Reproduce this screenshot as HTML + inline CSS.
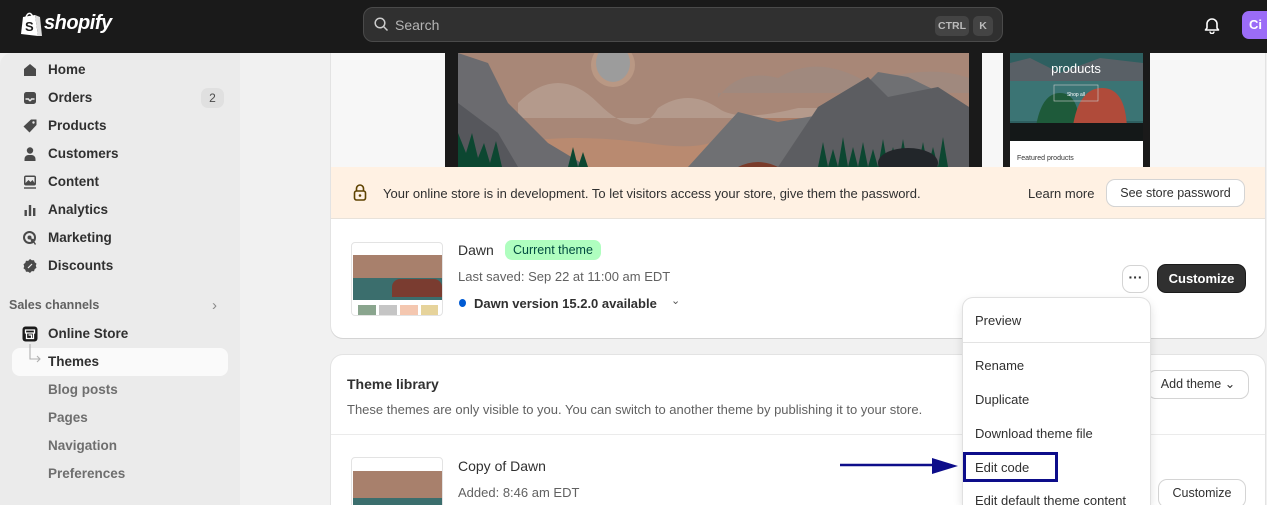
<!DOCTYPE html>
<html><head><meta charset="utf-8"><style>
*{box-sizing:border-box;margin:0;padding:0}
html,body{width:1267px;height:505px;overflow:hidden}
body{background:#f1f1f1;font-family:"Liberation Sans",Arial,sans-serif;color:#303030;font-size:13px}
#w{position:relative;width:1267px;height:505px;overflow:hidden}
.hdr{position:absolute;left:0;top:0;width:1267px;height:53px;background:#1a1a1a;z-index:50}
.abs{position:absolute}
.side{position:absolute;left:0;top:53px;width:240px;height:452px;background:#ebebeb;border-top-left-radius:12px}
.nav{position:absolute;left:48px;font-size:13.5px;font-weight:bold;color:#303030}
.sub{position:absolute;left:48px;font-size:13.5px;color:#616161;font-weight:bold;opacity:.9}
.ic{position:absolute;left:22px;width:16px;height:16px}
.card{position:absolute;background:#fff;border-radius:12px;box-shadow:0 1px 0 #d4d4d4,0 0 0 1px #e3e3e3}
.btn{position:absolute;border-radius:8px;background:#fff;box-shadow:0 0 0 1px #d4d4d4,0 1px 0 #bbb;font-size:12.5px;font-weight:bold;color:#303030;text-align:center}
.mi{position:absolute;left:975px;font-size:13px;color:#303030;white-space:nowrap}
</style></head><body><div id="w">
<div class="hdr">
  <svg class="abs" style="left:20px;top:12px" width="22" height="25" viewBox="0 0 22 25"><path d="M3 5 L15 3 L18 24 L1 22 Z" fill="#fff"/><path d="M6 5 Q8 0 11 2 Q13 4 13 6" stroke="#fff" stroke-width="1.5" fill="none"/><path d="M15 3 L20 5 L22 24 L18 24Z" fill="#ddd"/><text x="5" y="19" font-size="13" font-weight="bold" fill="#1a1a1a" font-family="Liberation Sans">S</text></svg>
  <div class="abs" style="left:44px;top:12px;color:#fff;font-size:20px;font-weight:bold;font-style:italic;letter-spacing:-0.5px">shopify</div>
  <div class="abs" style="left:363px;top:7px;width:640px;height:35px;border-radius:10px;background:#303030;border:1px solid #4a4a4a"></div>
  <svg class="abs" style="left:374px;top:17px" width="15" height="15" viewBox="0 0 15 15"><circle cx="6" cy="6" r="4.8" stroke="#ccc" stroke-width="1.5" fill="none"/><path d="M9.5 9.5L13.5 13.5" stroke="#ccc" stroke-width="1.5"/></svg>
  <div class="abs" style="left:395px;top:17px;color:#b5b5b5;font-size:14px">Search</div>
  <div class="abs" style="left:935px;top:16px;width:34px;height:20px;border-radius:5px;background:#444;color:#bbb;font-size:10.5px;font-weight:bold;text-align:center;line-height:20px">CTRL</div>
  <div class="abs" style="left:973px;top:16px;width:20px;height:20px;border-radius:5px;background:#444;color:#bbb;font-size:10.5px;font-weight:bold;text-align:center;line-height:20px">K</div>
  <svg class="abs" style="left:1203px;top:16px" width="18" height="18" viewBox="0 0 18 18"><path d="M4 12V8a5 5 0 0 1 10 0v4l1.5 2h-13z" stroke="#fff" stroke-width="1.6" fill="none" stroke-linejoin="round"/><path d="M7 15.5a2 2 0 0 0 4 0" stroke="#fff" stroke-width="1.5" fill="none"/></svg>
  <div class="abs" style="left:1242px;top:11px;width:25px;height:28px;border-radius:7px 0 0 7px;background:#9b6cf7;color:#fff;font-size:13px;font-weight:bold;line-height:28px;padding-left:7px">Ci</div>
</div>
<div class="side">
  <div class="abs" style="left:12px;top:295px;width:216px;height:28px;background:#fafafa;border-radius:8px"></div>
</div>
<svg class="ic" style="top:62px" viewBox="0 0 16 16"><path d="M2 7L8 2l6 5v7H2z" fill="#4a4a4a"/></svg>
<div class="nav" style="top:62px">Home</div>
<svg class="ic" style="top:90px" viewBox="0 0 16 16"><rect x="2" y="2" width="12" height="12" rx="2.5" fill="#4a4a4a"/><path d="M3.5 9h3l1 1.5h1l1-1.5h3" stroke="#ebebeb" stroke-width="1.4" fill="none"/></svg>
<div class="nav" style="top:90px">Orders</div>
<div class="abs" style="left:201px;top:88px;width:23px;height:20px;border-radius:7px;background:#e0e0e0;font-size:12px;text-align:center;line-height:20px;color:#4a4a4a">2</div>
<svg class="ic" style="top:118px" viewBox="0 0 16 16"><path d="M9 1.5h5.5V7L7.5 14.5 1.5 8.5z" fill="#4a4a4a"/><circle cx="11.5" cy="4.5" r="1.2" fill="#ebebeb"/></svg>
<div class="nav" style="top:118px">Products</div>
<svg class="ic" style="top:146px" viewBox="0 0 16 16"><circle cx="8" cy="4.5" r="3.2" fill="#4a4a4a"/><path d="M2.5 15v-2a4 4 0 0 1 4-4h3a4 4 0 0 1 4 4v2z" fill="#4a4a4a"/></svg>
<div class="nav" style="top:146px">Customers</div>
<svg class="ic" style="top:174px" viewBox="0 0 16 16"><rect x="2" y="1.5" width="12" height="10" rx="2" fill="#4a4a4a"/><rect x="3.5" y="3" width="9" height="6" fill="#ebebeb"/><path d="M3.5 9l3-3 2 2 2-2 2 3z" fill="#4a4a4a"/><path d="M2 14h12" stroke="#4a4a4a" stroke-width="1.4"/></svg>
<div class="nav" style="top:174px">Content</div>
<svg class="ic" style="top:202px" viewBox="0 0 16 16"><rect x="2.5" y="8" width="2.4" height="6" fill="#4a4a4a"/><rect x="6.8" y="3" width="2.4" height="11" fill="#4a4a4a"/><rect x="11" y="6" width="2.4" height="8" fill="#4a4a4a"/></svg>
<div class="nav" style="top:202px">Analytics</div>
<svg class="ic" style="top:230px" viewBox="0 0 16 16"><circle cx="7.5" cy="7.5" r="5.5" stroke="#4a4a4a" stroke-width="2" fill="none"/><circle cx="7.5" cy="7.5" r="2" fill="#4a4a4a"/><path d="M8 8l6 2-2 1 2 3-1 1-2-3-1 2z" fill="#4a4a4a"/></svg>
<div class="nav" style="top:230px">Marketing</div>
<svg class="ic" style="top:258px" viewBox="0 0 16 16"><path d="M8 1l1.8 1.3 2.2-.1.7 2.1 1.8 1.3-.7 2.1.7 2.1-1.8 1.3-.7 2.1-2.2-.1L8 15l-1.8-1.3-2.2.1-.7-2.1L1.5 10.4l.7-2.1-.7-2.1 1.8-1.3.7-2.1 2.2.1z" fill="#4a4a4a"/><path d="M6 10l4-4" stroke="#ebebeb" stroke-width="1.2"/></svg>
<div class="nav" style="top:258px">Discounts</div>
<div class="abs" style="left:9px;top:298px;font-size:12.5px;font-weight:bold;color:#616161">Sales channels</div>
<div class="abs" style="left:212px;top:297px;font-size:15px;color:#8a8a8a">›</div>
<svg class="ic" style="top:326px" viewBox="0 0 16 16"><rect x="0.5" y="0.5" width="15" height="15" rx="3" fill="#1a1a1a"/><path d="M3.5 4h9v3h-9zM4.5 7v5.5h7V7" stroke="#fff" stroke-width="1.3" fill="none"/><path d="M6.5 9h3v3.5" stroke="#fff" stroke-width="1.2" fill="none"/></svg>
<div class="nav" style="top:326px">Online Store</div>
<svg class="abs" style="left:27px;top:344px" width="16" height="22"><path d="M3 0v15h10m-3-3l3 3-3 3" stroke="#b0b0b0" stroke-width="1.1" fill="none"/></svg>
<div class="nav" style="top:354px;color:#303030">Themes</div>
<div class="sub" style="top:382px">Blog posts</div>
<div class="sub" style="top:410px">Pages</div>
<div class="sub" style="top:438px">Navigation</div>
<div class="sub" style="top:466px">Preferences</div>

<div class="card" style="left:331px;top:20px;width:934px;height:318px;overflow:hidden">
  <div class="abs" style="left:0;top:33px;width:934px;height:114px;background:#f7f7f7"></div>
  <div class="abs" style="left:114px;top:33px;width:537px;height:114px;background:#1a1a1a"></div>
  <svg class="abs" style="left:127px;top:33px" width="511" height="114" viewBox="0 0 511 114">
    <rect width="511" height="114" fill="#b98a70"/>
    <rect x="120" width="250" height="80" fill="#a97b65"/>
    <path d="M0 0h511v60H330q-40 0-60 20t-80 10q-80-10-130 0z" fill="#a88777"/>
    <path d="M60 50q40-40 80 0t60 5q30-20 60 0 20 15 80 0h251v10H60z" fill="#b49a8c"/>
    <path d="M260 45q20-30 60-20 40-25 90 5 60-20 101-5v15H260z" fill="#a0897e"/>
    <ellipse cx="155" cy="12" rx="22" ry="22" fill="#b99884"/>
    <ellipse cx="155" cy="10" rx="17" ry="19" fill="#9c9c9c"/>
    <path d="M0 0l30 10 20 40 40 40 40 24H0z" fill="#6b6b6f"/>
    <path d="M0 50l40 30 20 34H0z" fill="#56575c"/>
    <path d="M230 114l50-55 40 10 60-10 40-40 30 5 61 30v64z" fill="#6f7073"/>
    <path d="M320 114l40-60 50-30 20 20 50-10 31 20v60z" fill="#5c5d61"/>
    <path d="M0 80l8 20 6-20 6 25 6-15 6 20 6-22 6 26H0z" fill="#0c4731"/>
    <path d="M110 114l5-20 5 20 5-15 5 15z" fill="#0c4731"/>
    <path d="M360 114l5-25 5 25 5-18 5 18 5-30 5 30 5-20 5 20 5-25 5 25 5-18 5 18 5-28 5 28 5-20 5 20 5-28 5 28 5-18 5 18 5-25 5 25 5-20 5 20 5-30 5 30z" fill="#0c4731"/>
    <ellipse cx="450" cy="110" rx="30" ry="15" fill="#22262a"/>
    <path d="M280 114q20-10 40 0z" fill="#7a3b2a"/>
  </svg>
  <div class="abs" style="left:672px;top:33px;width:147px;height:114px;background:#1a1a1a"></div>
  <svg class="abs" style="left:679px;top:33px" width="133" height="114" viewBox="0 0 133 114">
    <rect width="133" height="90" fill="#2e5f60"/>
    <path d="M0 10l20-5 30 15 40-15 43 5v25H0z" fill="#596066"/>
    <path d="M0 28h133v40H0z" fill="#3b7474"/>
    <path d="M25 80q5-40 25-40t20 40z" fill="#1e5a3a"/>
    <path d="M62 80q5-45 30-45t25 45z" fill="#b04b3a"/>
    <rect y="70" width="133" height="20" fill="#141818"/>
    <rect y="88" width="133" height="26" fill="#fff"/>
    <text x="66" y="20" font-size="13" fill="#fff" text-anchor="middle" font-family="Liberation Sans">products</text>
    <rect x="44" y="32" width="44" height="16" fill="none" stroke="#ccc" stroke-width="0.6"/>
    <text x="66" y="43" font-size="5" fill="#fff" text-anchor="middle">Shop all</text>
    <text x="7" y="107" font-size="7" fill="#333">Featured products</text>
  </svg>
  <div class="abs" style="left:0;top:147px;width:934px;height:52px;background:#fff1e3;border-bottom:1px solid #e8e2da"></div>
  <svg class="abs" style="left:22px;top:164px" width="14" height="17" viewBox="0 0 14 17"><path d="M3.5 7V4.5a3.5 3.5 0 0 1 7 0V7" stroke="#5e4200" stroke-width="1.6" fill="none"/><rect x="1.5" y="7" width="11" height="9" rx="2" stroke="#5e4200" stroke-width="1.6" fill="none"/><circle cx="7" cy="11.5" r="1.3" fill="#5e4200"/></svg>
  <div class="abs" style="left:52px;top:166px;font-size:13px;color:#303030">Your online store is in development. To let visitors access your store, give them the password.</div>
  <div class="abs" style="left:697px;top:166px;font-size:13px;color:#303030">Learn more</div>
  <div class="btn" style="left:776px;top:160px;width:137px;height:26px;line-height:26px;font-weight:normal;color:#303030">See store password</div>
  <div class="abs" style="left:20px;top:222px;width:92px;height:74px;border:1px solid #e3e3e3;border-radius:4px;background:#fff;overflow:hidden">
    <div class="abs" style="left:1px;top:12px;width:89px;height:45px;background:#a8806c"></div>
    <div class="abs" style="left:1px;top:35px;width:89px;height:22px;background:#3b6e6d"></div>
    <div class="abs" style="left:40px;top:36px;width:50px;height:18px;background:#7a3c30;border-radius:8px 8px 0 0"></div>
    <div class="abs" style="left:6px;top:62px;width:80px;height:10px;background:repeating-linear-gradient(90deg,#8aa58e 0 18px,#fff 18px 21px,#c5c5c5 21px 39px,#fff 39px 42px,#f4c7b0 42px 60px,#fff 60px 63px,#e6d39b 63px 80px)"></div>
  </div>
  <div class="abs" style="left:127px;top:222px;font-size:14px;color:#303030">Dawn</div>
  <div class="abs" style="left:174px;top:220px;height:20px;padding:0 8px;border-radius:7px;background:#affebf;color:#014b40;font-size:12.5px;line-height:20px">Current theme</div>
  <div class="abs" style="left:127px;top:249px;font-size:13px;color:#616161">Last saved: Sep 22 at 11:00 am EDT</div>
  <div class="abs" style="left:128px;top:279px;width:7px;height:8px;border-radius:50%;background:#005bd3"></div>
  <div class="abs" style="left:143px;top:276px;font-size:13px;font-weight:bold;color:#303030">Dawn version 15.2.0 available</div>
  <div class="abs" style="left:340px;top:274px;font-size:11px;color:#555">⌄</div>
  <div class="btn" style="left:792px;top:246px;width:25px;height:26px;line-height:22px;font-size:14px">···</div>
  <div class="abs" style="left:827px;top:245px;width:87px;height:27px;border-radius:8px;background:#303030;box-shadow:0 0 0 1px #1a1a1a;color:#fff;font-weight:bold;font-size:13px;text-align:center;line-height:27px">Customize</div>
</div>

<div class="card" style="left:331px;top:355px;width:934px;height:150px;overflow:hidden;border-radius:12px 12px 0 0">
  <div class="abs" style="left:16px;top:21px;font-size:14px;font-weight:bold;color:#303030">Theme library</div>
  <div class="abs" style="left:16px;top:47px;font-size:13px;color:#616161">These themes are only visible to you. You can switch to another theme by publishing it to your store.</div>
  <div class="abs" style="left:0;top:79px;width:934px;height:1px;background:#ebebeb"></div>
  <div class="btn" style="left:817px;top:16px;width:100px;height:27px;line-height:27px;font-weight:normal">Add theme ⌄</div>
  <div class="abs" style="left:20px;top:102px;width:92px;height:60px;border:1px solid #e3e3e3;border-radius:4px;background:#fff;overflow:hidden">
    <div class="abs" style="left:1px;top:13px;width:89px;height:60px;background:#a8806c"></div>
    <div class="abs" style="left:1px;top:40px;width:89px;height:30px;background:#3b6e6d"></div>
  </div>
  <div class="abs" style="left:127px;top:103px;font-size:14px;color:#303030">Copy of Dawn</div>
  <div class="abs" style="left:127px;top:130px;font-size:13px;color:#616161">Added: 8:46 am EDT</div>
  <div class="btn" style="left:828px;top:125px;width:86px;height:27px;line-height:27px;font-weight:normal">Customize</div>
</div>

<div class="abs" style="left:963px;top:298px;width:187px;height:207px;background:#fff;border-radius:10px 10px 0 0;box-shadow:0 0 0 1px #e0e0e0,0 4px 10px rgba(0,0,0,.15)"></div>
<div class="abs" style="left:963px;top:342px;width:187px;height:1px;background:#e3e3e3"></div>
<div class="mi" style="top:313px">Preview</div>
<div class="mi" style="top:358px">Rename</div>
<div class="mi" style="top:392px">Duplicate</div>
<div class="mi" style="top:426px">Download theme file</div>
<div class="mi" style="top:460px">Edit code</div>
<div class="mi" style="top:493px">Edit default theme content</div>
<div class="abs" style="left:963px;top:452px;width:95px;height:30px;border:3px solid #0d0d8a"></div>
<svg class="abs" style="left:838px;top:457px" width="122" height="18"><path d="M2 8h95" stroke="#0d0d8a" stroke-width="2.5"/><path d="M94 1l26 8-26 8z" fill="#0d0d8a"/></svg>
</div></body></html>
